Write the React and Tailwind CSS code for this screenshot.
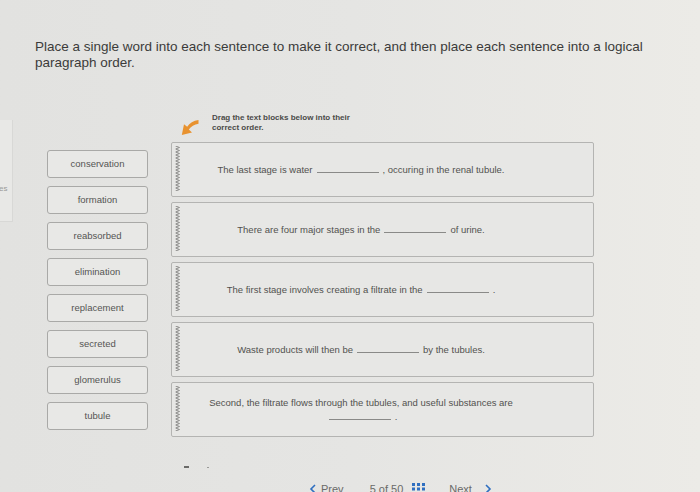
import React from 'react';

const words = ['conservation', 'formation', 'reabsorbed', 'elimination', 'replacement', 'secreted', 'glomerulus', 'tubule'];

function Blank() {
    return <span className="inline-block w-[62px] h-[8px] border-b border-[#8a8a88] mx-[4px]"></span>;
}

function Handle() {
    return (
        <div className="w-[11px] shrink-0 flex justify-center pt-[3px] pb-[5px]">
            <svg width="5" height="100%" className="h-full">
                <defs>
                    <pattern id="zig" width="5" height="3" patternUnits="userSpaceOnUse">
                        <path d="M0.5 0 L4.5 1.5 L0.5 3" fill="none" stroke="#8c8c8a" strokeWidth="1" />
                    </pattern>
                </defs>
                <rect x="0" y="0" width="5" height="100%" fill="url(#zig)" />
            </svg>
        </div>
    );
}

function SentenceBox({ children }) {
    return (
        <div className="flex h-[55px] w-[423px] border border-[#b4b4b2] rounded-[2px] bg-[#e7e7e5]">
            <Handle />
            <div className="flex-1 flex items-center justify-center pr-[54px] text-[9.5px] leading-[14px] text-[#52524f] text-center">
                <div>{children}</div>
            </div>
        </div>
    );
}

export default function App() {
    return (
        <div className="w-[700px] h-[492px] overflow-hidden flex bg-gradient-to-r from-[#e2e2e0] via-[#e5e5e3] to-[#ecebe7]" style={{ fontFamily: '"Liberation Sans", Arial, sans-serif' }}>
            <div className="w-[13px] shrink-0 pt-[120px]">
                <div className="h-[102px] border-r border-b border-[#d8d8d6] bg-[#e8e8e6] flex items-end pb-[26px]">
                    <span className="text-[8px] text-[#9a9a98] -ml-[1px]">es</span>
                </div>
            </div>

            <div className="flex-1 pl-[22px] pt-[39px]">
                <p className="text-[13.5px] leading-[16px] text-[#3b3b3a] w-[640px]">
                    Place a single word into each sentence to make it correct, and then place each sentence into a logical paragraph order.
                </p>

                <div className="flex mt-[41px]">
                    <div className="pl-[12px] pt-[38px] flex flex-col gap-[8px]">
                        {words.map(w => (
                            <div key={w} className="w-[101px] h-[28px] border border-[#a9a9a7] rounded-[3px] bg-[#e8e8e6] flex items-center justify-center text-[9.5px] text-[#555553]">
                                {w}
                            </div>
                        ))}
                    </div>

                    <div className="ml-[23px] flex flex-col">
                        <div className="h-[30px] flex items-start pl-[10px]">
                            <svg width="18" height="19" viewBox="0 0 18 19" className="mt-[5px]">
                                <path d="M17.5 3 C12.5 3.5 8.5 6 6.2 9.8 L3 7.2 L0.8 18 L11 15.5 L7.8 12.6 C9.8 9.6 13.5 7.3 17.5 6.8 Z" fill="#e8922f" />
                            </svg>
                            <div className="ml-[13px] mt-[1px] text-[8px] leading-[10px] font-bold text-[#4a4a48]">
                                Drag the text blocks below into their<br />correct order.
                            </div>
                        </div>

                        <div className="flex flex-col gap-[5px]">
                            <SentenceBox>The last stage is water<Blank />, occuring in the renal tubule.</SentenceBox>
                            <SentenceBox>There are four major stages in the<Blank />of urine.</SentenceBox>
                            <SentenceBox>The first stage involves creating a filtrate in the<Blank />.</SentenceBox>
                            <SentenceBox>Waste products will then be<Blank />by the tubules.</SentenceBox>
                            <SentenceBox>Second, the filtrate flows through the tubules, and useful substances are<br /><Blank />.</SentenceBox>
                        </div>

                        <div className="flex items-center gap-[18px] pl-[13px] mt-[28px] h-[4px]">
                            <span className="w-[5px] h-[1.5px] bg-[#6a6a68]"></span>
                            <span className="w-[2px] h-[1px] bg-[#9a9a98]"></span>
                        </div>

                        <div className="flex items-center ml-[138px] mt-[12px] text-[11px] text-[#6a6a68]">
                            <svg width="8" height="10" viewBox="0 0 8 10"><path d="M6 1 L2 5 L6 9" fill="none" stroke="#2f6fc0" strokeWidth="1.6" /></svg>
                            <span className="ml-[4px]">Prev</span>
                            <span className="ml-[26px]">5 of 50</span>
                            <svg width="13" height="12" viewBox="0 0 13 12" className="ml-[9px]">
                                <g fill="#2f6fc0">
                                    <rect x="0" y="0" width="3" height="3" /><rect x="5" y="0" width="3" height="3" /><rect x="10" y="0" width="3" height="3" />
                                    <rect x="0" y="4.5" width="3" height="3" /><rect x="5" y="4.5" width="3" height="3" /><rect x="10" y="4.5" width="3" height="3" />
                                    <rect x="0" y="9" width="3" height="3" /><rect x="5" y="9" width="3" height="3" /><rect x="10" y="9" width="3" height="3" />
                                </g>
                            </svg>
                            <span className="ml-[24px]">Next</span>
                            <svg width="8" height="10" viewBox="0 0 8 10" className="ml-[12px]"><path d="M2 1 L6 5 L2 9" fill="none" stroke="#2f6fc0" strokeWidth="1.6" /></svg>
                        </div>
                    </div>
                </div>
            </div>
        </div>
    );
}
